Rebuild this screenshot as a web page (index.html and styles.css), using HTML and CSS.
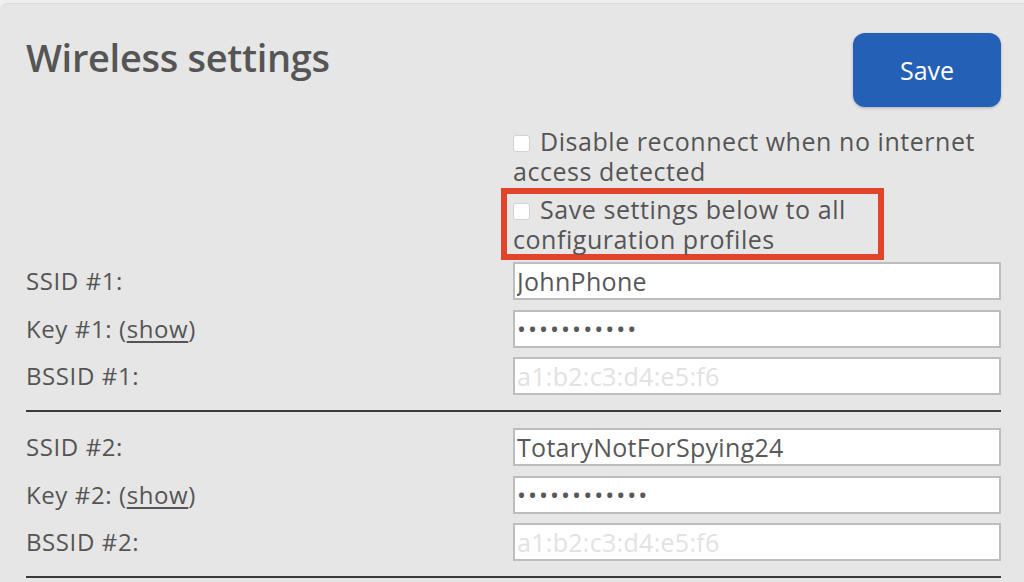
FILE: index.html
```html
<!DOCTYPE html>
<html lang="en">
<head>
<meta charset="utf-8">
<title>Wireless settings</title>
<link rel="stylesheet" href="styles.css">
</head>
<body>
<div class="panel">
  <header class="head">
    <h1 class="title">Wireless settings</h1>
    <button class="save" type="button">Save</button>
  </header>

  <div class="options">
    <label class="opt"><input type="checkbox" class="cb"> Disable reconnect when no internet access detected</label>
    <div class="highlight">
      <label class="opt"><input type="checkbox" class="cb"> Save settings below to all configuration profiles</label>
    </div>
  </div>

  <section class="group">
    <div class="row"><span class="lbl">SSID #1:</span><input class="field" type="text" value="JohnPhone"></div>
    <div class="row"><span class="lbl">Key #1: (<a class="show" href="#">show</a>)</span><input class="field pw" type="password" value="abcdefghijk"></div>
    <div class="row"><span class="lbl">BSSID #1:</span><input class="field" type="text" placeholder="a1:b2:c3:d4:e5:f6"></div>
  </section>
  <hr class="sep">
  <section class="group">
    <div class="row"><span class="lbl">SSID #2:</span><input class="field" type="text" value="TotaryNotForSpying24"></div>
    <div class="row"><span class="lbl">Key #2: (<a class="show" href="#">show</a>)</span><input class="field pw" type="password" value="abcdefghijkl"></div>
    <div class="row"><span class="lbl">BSSID #2:</span><input class="field" type="text" placeholder="a1:b2:c3:d4:e5:f6"></div>
  </section>
  <hr class="sep">
</div>
</body>
</html>
```

FILE: styles.css
```css
html, body {
  margin: 0;
  padding: 0;
  background: #efefef;
  height: 100%;
  overflow: hidden;
}

body {
  font-family: "Open Sans", "Liberation Sans", sans-serif;
  color: #555555;
}

.panel {
  margin-top: 3px;
  background: #e6e6e6;
  border-top: 1px solid #dadada;
  border-top-left-radius: 8px;
  padding: 0 23px 0 26px;
  min-height: 600px;
}

.head {
  display: flex;
  justify-content: space-between;
  align-items: flex-start;
  padding-top: 29px;
}

.title {
  margin: -2px 0 0 0;
  font-size: 38px;
  font-weight: 600;
  line-height: 52px;
  color: #555555;
  letter-spacing: -0.3px;
}

.save {
  width: 148px;
  height: 74px;
  border: none;
  border-radius: 12px;
  background: #2560b7;
  color: #ffffff;
  font-family: inherit;
  font-size: 25px;
  box-shadow: 0 1px 3px rgba(0,0,0,0.25);
  padding: 0;
}

.options {
  margin-left: 487px;
  margin-top: 19px;
  display: flex;
  flex-direction: column;
  gap: 2px;
}

.opt {
  display: block;
  font-size: 25px;
  line-height: 30px;
  letter-spacing: 0.55px;
  color: #555555;
}

.cb {
  appearance: none;
  -webkit-appearance: none;
  width: 17px;
  height: 17px;
  margin: 0 3px 0 0;
  border: 1px solid #d2d2d2;
  border-radius: 3px;
  background: #ffffff;
  vertical-align: -1px;
}

.highlight {
  margin-left: -12px;
  width: 383px;
  box-sizing: border-box;
  border: 6px solid #e2432b;
  padding: 0 0 0 6px;
  height: 72px;
}

.group {
  display: flex;
  flex-direction: column;
  gap: 9.5px;
  margin-top: 2px;
}

.sep + .group {
  margin-top: 16px;
}

.row {
  display: grid;
  grid-template-columns: 487px 1fr;
  align-items: center;
}

.lbl {
  font-size: 24px;
  line-height: 30px;
  letter-spacing: 0.6px;
  color: #555555;
}

.show {
  color: #555555;
  text-decoration: underline;
  text-underline-offset: 3px;
}

.field {
  box-sizing: border-box;
  height: 38px;
  width: 100%;
  border: 2px solid #bdbdbd;
  background: #ffffff;
  padding: 0 2px;
  font-family: inherit;
  font-size: 25px;
  letter-spacing: 0.3px;
  color: #585858;
  outline: none;
}

.pw {
  letter-spacing: 2px;
  font-size: 24px;
}

.field::placeholder {
  color: #e2e2e2;
}

.sep {
  border: none;
  border-top: 2px solid #3a3a3a;
  margin: 15px 0 0 0;
  height: 0;
}
```
